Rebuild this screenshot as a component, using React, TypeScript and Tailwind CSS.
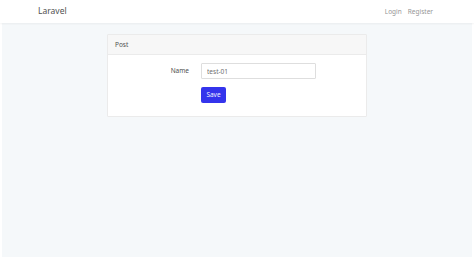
const App = () => {
    return (
        <div className="min-h-screen h-[260px] flex flex-col bg-white font-['Noto_Sans',sans-serif] text-[#555]">
            {/* Navbar */}
            <nav className="h-[23px] shrink-0 flex items-center justify-between bg-white shadow-[0_1px_2px_rgba(0,0,0,0.05)] pl-[38px] pr-[41px] relative z-10">
                <a href="/" className="text-[8.5px] text-[#505050]">Laravel</a>
                <div className="flex gap-[6px] text-[6.5px] text-[#969696]">
                    <a href="/login">Login</a>
                    <a href="/register">Register</a>
                </div>
            </nav>

            {/* Main */}
            <main className="flex-1 mx-[2px] mb-[3px] bg-[#f5f8fa] pt-[11px]">
                <div className="w-[260px] ml-[105px] bg-white border border-[#ebebeb] rounded-[1px]">
                    <div className="h-[20px] flex items-center px-[7px] bg-[#f7f7f7] border-b border-[#ebebeb] text-[6.5px] text-[#505050]">
                        Post
                    </div>
                    <form className="pt-[8px] pb-[13px]">
                        <div className="flex items-center">
                            <label className="w-[81px] text-right text-[6.5px] text-[#505050]">Name</label>
                            <input
                                defaultValue="test-01"
                                className="ml-[12px] w-[115px] h-[16px] px-[5px] text-[6.5px] text-[#707070] border border-[#dedede] rounded-[1px] bg-white outline-none"
                            />
                        </div>
                        <button
                            type="button"
                            className="ml-[93px] mt-[7px] w-[25px] h-[16px] bg-[#3434ec] rounded-[2px] text-[6.5px] text-[#f0f0ff]"
                        >
                            Save
                        </button>
                    </form>
                </div>
            </main>
        </div>
    )
}

export default App
